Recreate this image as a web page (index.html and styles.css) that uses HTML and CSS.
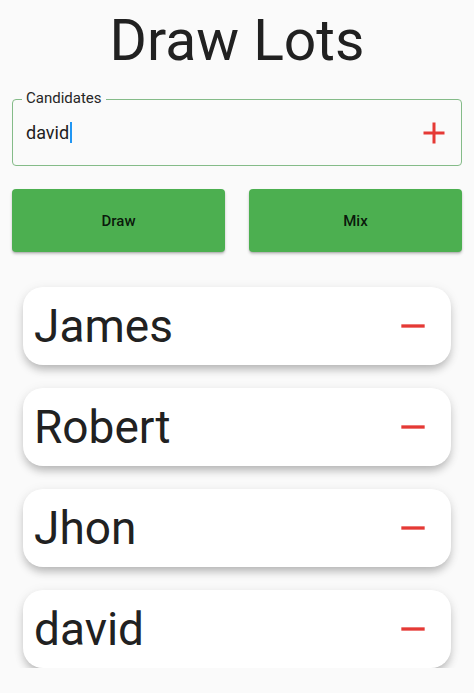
FILE: index.html
```html
<!DOCTYPE html>
<html lang="en">
<head>
<meta charset="utf-8">
<title>Draw Lots</title>
<link rel="stylesheet" href="styles.css">
</head>
<body>
<main class="app">
  <h1 class="title">Draw Lots</h1>

  <div class="field">
    <span class="field-label">Candidates</span>
    <div class="field-value">david<span class="caret"></span></div>
    <button class="icon-btn add" aria-label="Add">
      <svg viewBox="0 0 24 24" width="36" height="36"><path d="M19 13h-6v6h-2v-6H5v-2h6V5h2v6h6v2z"/></svg>
    </button>
  </div>

  <div class="actions">
    <button class="action">Draw</button>
    <button class="action">Mix</button>
  </div>

  <ul class="list">
    <li class="card"><span class="name">James</span>
      <button class="icon-btn remove" aria-label="Remove"><svg viewBox="0 0 24 24" width="40" height="40"><path d="M19 13H5v-2h14v2z"/></svg></button></li>
    <li class="card"><span class="name">Robert</span>
      <button class="icon-btn remove" aria-label="Remove"><svg viewBox="0 0 24 24" width="40" height="40"><path d="M19 13H5v-2h14v2z"/></svg></button></li>
    <li class="card"><span class="name">Jhon</span>
      <button class="icon-btn remove" aria-label="Remove"><svg viewBox="0 0 24 24" width="40" height="40"><path d="M19 13H5v-2h14v2z"/></svg></button></li>
    <li class="card"><span class="name">david</span>
      <button class="icon-btn remove" aria-label="Remove"><svg viewBox="0 0 24 24" width="40" height="40"><path d="M19 13H5v-2h14v2z"/></svg></button></li>
  </ul>
</main>
</body>
</html>
```

FILE: styles.css
```css
* { box-sizing: border-box; }

html, body {
  margin: 0;
  padding: 0;
  background: #fafafa;
}

body {
  font-family: Roboto, "Noto Sans", "Liberation Sans", sans-serif;
  color: #212121;
}

.app {
  display: flex;
  flex-direction: column;
}

.title {
  margin: 0;
  padding-top: 7px;
  font-size: 57px;
  line-height: 67px;
  font-weight: 400;
  text-align: center;
  color: #212121;
}

.field {
  position: relative;
  margin: 25px 12px 0;
  height: 67px;
  border: 1px solid #84bb88;
  border-radius: 4px;
  display: flex;
  align-items: center;
  padding: 0 9px 0 13px;
}

.field-label {
  position: absolute;
  top: -11px;
  left: 9px;
  padding: 0 4px;
  background: #fafafa;
  font-size: 15px;
  line-height: 18px;
  color: #262626;
}

.field-value {
  flex: 1;
  font-size: 18px;
  line-height: 21px;
  color: #212121;
  display: flex;
  align-items: center;
}

.caret {
  display: inline-block;
  width: 2px;
  height: 21px;
  margin-left: 1px;
  background: #2196f3;
}

.icon-btn {
  border: 0;
  background: none;
  padding: 0;
  margin: 0;
  display: flex;
  align-items: center;
  justify-content: center;
  fill: #e53935;
}

.actions {
  display: flex;
  gap: 24px;
  margin: 23px 12px 0;
}

.action {
  flex: 1;
  height: 63px;
  border: 0;
  border-radius: 4px;
  background: #4caf50;
  box-shadow: 0 2px 3px rgba(0, 0, 0, 0.22), 0 1px 1px rgba(0, 0, 0, 0.1);
  font-family: Roboto, "Noto Sans", "Liberation Sans", sans-serif;
  font-size: 15px;
  font-weight: 500;
  color: rgba(0, 0, 0, 0.87);
}

.list {
  list-style: none;
  margin: 35px 23px 0;
  padding: 0;
  display: flex;
  flex-direction: column;
  gap: 23px;
}

.card {
  height: 78px;
  background: #fff;
  border-radius: 20px;
  box-shadow: 0 6px 10px -2px rgba(0, 0, 0, 0.25), 0 2px 12px rgba(0, 0, 0, 0.08);
  display: flex;
  align-items: center;
  padding: 0 18px 0 11px;
}

.name {
  flex: 1;
  font-size: 46px;
  line-height: 54px;
  color: #212121;
}
```
